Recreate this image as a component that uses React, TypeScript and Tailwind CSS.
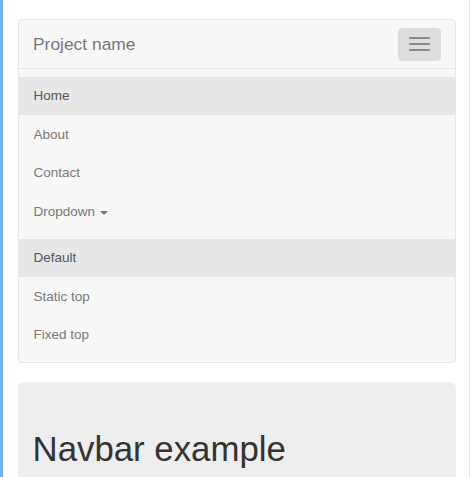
import React from "react";

const font = { fontFamily: '"Liberation Sans", Arial, sans-serif' };

function NavItem({ label, active, caret }: { label: string; active?: boolean; caret?: boolean }) {
  return (
    <li
      className={`h-[38.7px] flex items-center px-[14.5px] text-[13.5px] ${
        active ? "bg-[#e7e7e7] text-[#555555]" : "text-[#777777]"
      }`}
    >
      <span>{label}</span>
      {caret && (
        <span className="ml-[5px] inline-block w-0 h-0 border-l-[4px] border-r-[4px] border-t-[4px] border-l-transparent border-r-transparent border-t-[#777777] mt-[1px]" />
      )}
    </li>
  );
}

export default function App() {
  return (
    <div className="w-[474px] h-[477px] overflow-hidden bg-white flex" style={font}>
      <div className="w-[3px] h-full bg-[#74b0f0] shrink-0" />
      <div className="w-[466px] shrink-0 pl-[15px] pr-[13px] pt-[19px]">
        <nav className="w-[438px] border border-[#e7e7e7] bg-[#f8f8f8] rounded-[4px]">
          <div className="h-[48.4px] flex items-center justify-between pl-[14px] pr-[14.5px]">
            <span className="text-[17.4px] text-[#777777]">Project name</span>
            <button className="w-[42.5px] h-[32.9px] bg-[#dddddd] border border-[#dddddd] rounded-[4px] flex flex-col items-center justify-center gap-[3.9px]">
              <span className="block w-[21.3px] h-[2px] bg-[#888888] rounded-[1px]" />
              <span className="block w-[21.3px] h-[2px] bg-[#888888] rounded-[1px]" />
              <span className="block w-[21.3px] h-[2px] bg-[#888888] rounded-[1px]" />
            </button>
          </div>
          <div className="border-t border-[#e7e7e7] py-[7.25px]">
            <ul>
              <NavItem label="Home" active />
              <NavItem label="About" />
              <NavItem label="Contact" />
              <NavItem label="Dropdown" caret />
            </ul>
            <ul className="mt-[7.25px]">
              <NavItem label="Default" active />
              <NavItem label="Static top" />
              <NavItem label="Fixed top" />
            </ul>
          </div>
        </nav>
        <div className="mt-[19.3px] w-[438px] h-[200px] bg-[#eeeeee] rounded-[6px] pt-[48px] px-[14.5px]">
          <h1 className="text-[34.8px] leading-[1.1] text-[#333333]">Navbar example</h1>
        </div>
      </div>
      <div className="w-px h-full bg-[#e8e8e8] shrink-0" />
      <div className="w-[4px] h-full bg-white shrink-0" />
    </div>
  );
}
